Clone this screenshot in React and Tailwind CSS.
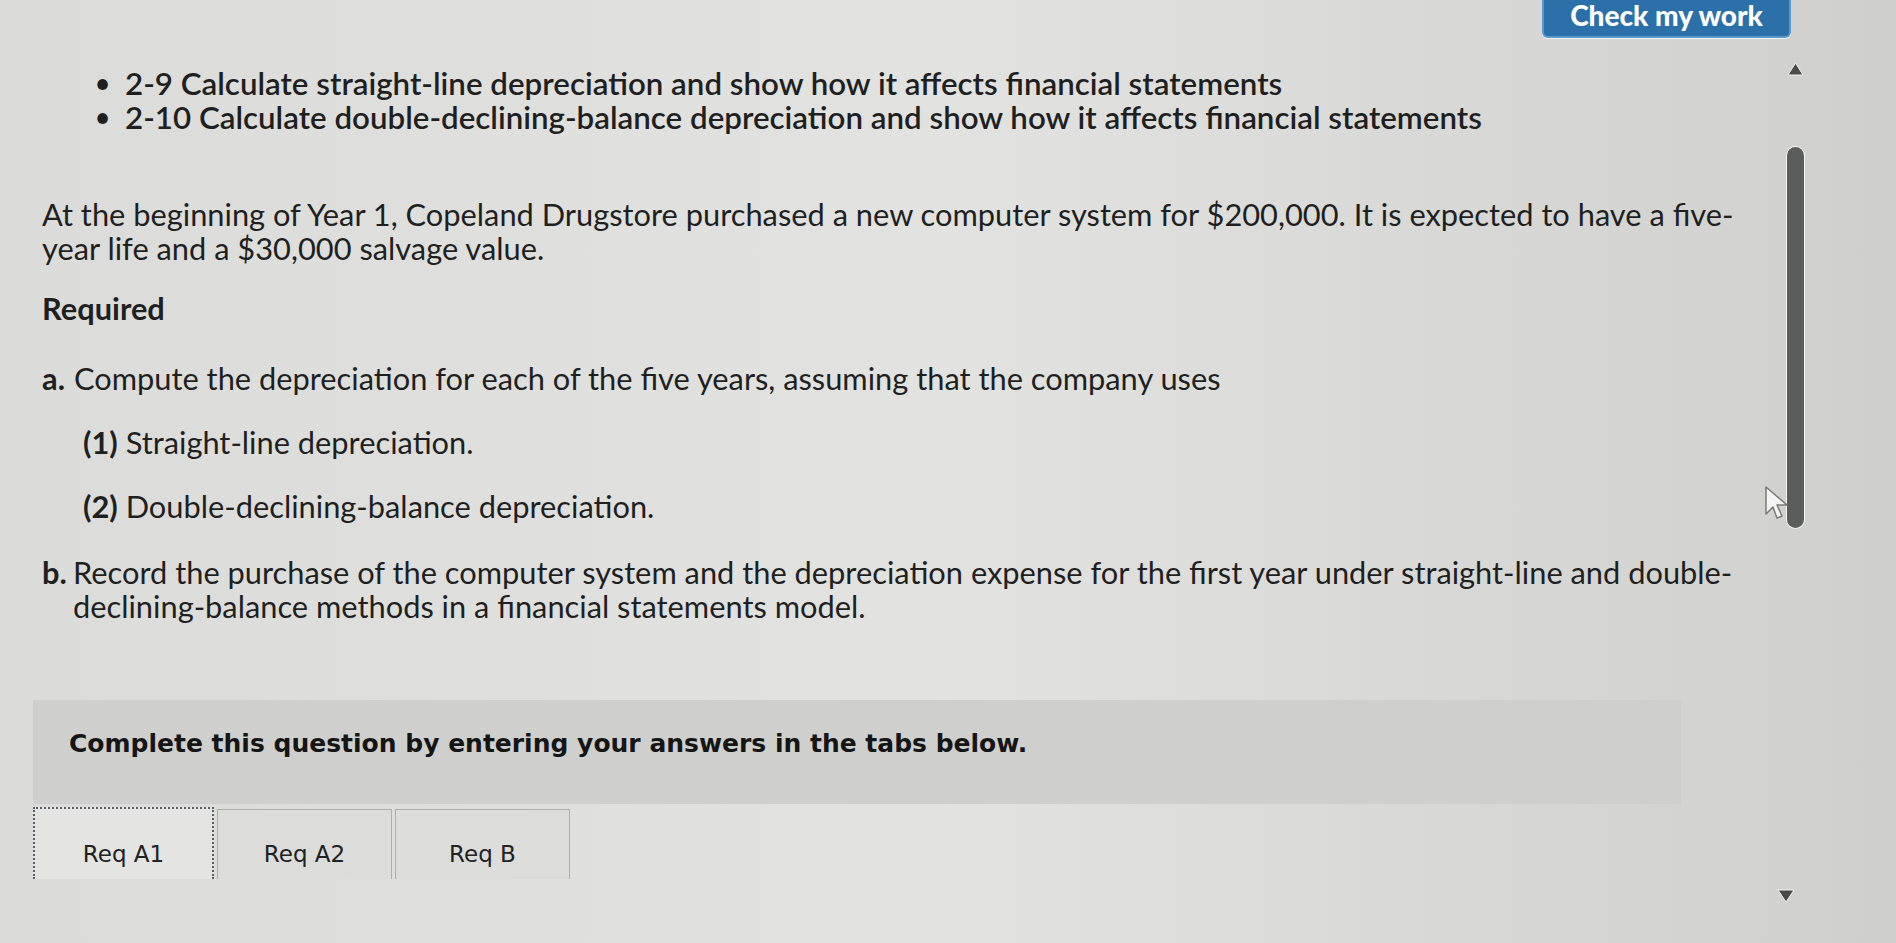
import React from 'react';

const bodyFont = { fontFamily: 'Lato, "Open Sans", sans-serif' };

const Tab = ({ label, active }) => (
  <div
    className={
      active
        ? 'w-[181px] h-[72px] flex items-center justify-center pt-[20px] bg-[#e4e5e3] border-2 border-dotted border-[#5a6068] border-b-0'
        : 'w-[175px] h-[70px] mt-[2px] flex items-center justify-center pt-[20px] bg-[#dcdddb] border border-[#adadab] border-b-0'
    }
  >
    <span className="text-[23px] text-[#222]" style={{ fontFamily: '"DejaVu Sans", Verdana, sans-serif' }}>
      {label}
    </span>
  </div>
);

const App = () => {
  return (
    <div
      className="w-full h-[943px] overflow-hidden bg-linear-to-r from-[#dbdcd9] via-[#e2e3e1] to-[#cfd0cd] text-[#1f1f1f] flex flex-col"
      style={bodyFont}
    >
      {/* header */}
      <div className="h-[38px] flex justify-end pr-[105px]">
        <button className="mt-[-6px] h-[44px] w-[249px] rounded-b-md bg-[#2b70a9] border-2 border-t-0 border-[#5d98cc] shadow-[0_1px_0_#f4f7fa] flex items-center justify-center">
          <span className="text-white font-black text-[28px] leading-none">Check my work</span>
        </button>
      </div>

      <div className="flex flex-1">
        {/* main */}
        <div className="flex-1 pl-[42px]">
          <ul className="mt-[28px] pl-[53px] text-[31.3px] font-semibold leading-[34px]">
            <li className="flex whitespace-nowrap">
              <span className="w-[30px] text-[26px]">•</span>
              <span>2-9 Calculate straight-line depreciation and show how it affects financial statements</span>
            </li>
            <li className="flex whitespace-nowrap">
              <span className="w-[30px] text-[26px]">•</span>
              <span>2-10 Calculate double-declining-balance depreciation and show how it affects financial statements</span>
            </li>
          </ul>

          <div className="mt-[64px] text-[30.8px] leading-[34px] whitespace-nowrap">
            <div>At the beginning of Year 1, Copeland Drugstore purchased a new computer system for $200,000. It is expected to have a five-</div>
            <div>year life and a $30,000 salvage value.</div>
          </div>

          <div className="mt-[26px] text-[30.8px] leading-[34px] font-bold">Required</div>

          <div className="mt-[36px] text-[30.8px] leading-[34px] flex whitespace-nowrap">
            <span className="font-bold w-[32px]">a.</span>
            <span>Compute the depreciation for each of the five years, assuming that the company uses</span>
          </div>

          <div className="mt-[30px] pl-[41px] text-[30.8px] leading-[34px] whitespace-nowrap">
            <span className="font-bold">(1)</span> Straight-line depreciation.
          </div>
          <div className="mt-[30px] pl-[41px] text-[30.8px] leading-[34px] whitespace-nowrap">
            <span className="font-bold">(2)</span> Double-declining-balance depreciation.
          </div>

          <div className="mt-[32px] text-[30.8px] leading-[34px] flex whitespace-nowrap">
            <span className="font-bold w-[31px] shrink-0">b.</span>
            <div>
              <div>Record the purchase of the computer system and the depreciation expense for the first year under straight-line and double-</div>
              <div>declining-balance methods in a financial statements model.</div>
            </div>
          </div>

          {/* instruction box */}
          <div className="mt-[76px] ml-[-9px] w-[1648px] h-[104px] bg-[#cfd0cd] pl-[36px] pt-[29px]">
            <div
              className="text-[25px] leading-[30px] font-bold text-[#151515]"
              style={{ fontFamily: '"DejaVu Sans", Verdana, sans-serif' }}
            >
              Complete this question by entering your answers in the tabs below.
            </div>
          </div>

          {/* tabs */}
          <div className="mt-[3px] ml-[-9px] flex gap-[3px]">
            <Tab label="Req A1" active />
            <Tab label="Req A2" />
            <Tab label="Req B" />
          </div>
        </div>

        {/* scrollbar column */}
        <div className="relative w-[146px] pr-[56px] flex flex-col items-center">
          <svg className="mt-[24px]" width="17" height="14" viewBox="0 0 17 14">
            <path d="M8.5 1 L16 13 L1 13 Z" fill="#4a4a4a" stroke="#f2f2f2" strokeWidth="1" strokeLinejoin="round" />
          </svg>
          <div className="mt-[71px] w-[17px] h-[381px] rounded-full bg-[#5b5c5c] ring-1 ring-[#f4f4f2]" />
          <svg className="mt-[361px] mr-[18px]" width="18" height="14" viewBox="0 0 18 14">
            <path d="M1 1 L17 1 L9 13 Z" fill="#4a4a4a" stroke="#f2f2f2" strokeWidth="1" strokeLinejoin="round" />
          </svg>
          {/* mouse cursor */}
          <svg className="absolute left-[14px] top-[447px]" width="26" height="38" viewBox="0 0 26 38">
            <path
              d="M2 2 L2 29 L9 22 L13 33 L18 31 L13 20 L23 20 Z"
              fill="#f4f4f4"
              stroke="#7a7a7a"
              strokeWidth="1.5"
              strokeLinejoin="round"
            />
          </svg>
        </div>
      </div>
    </div>
  );
};

export default App;
